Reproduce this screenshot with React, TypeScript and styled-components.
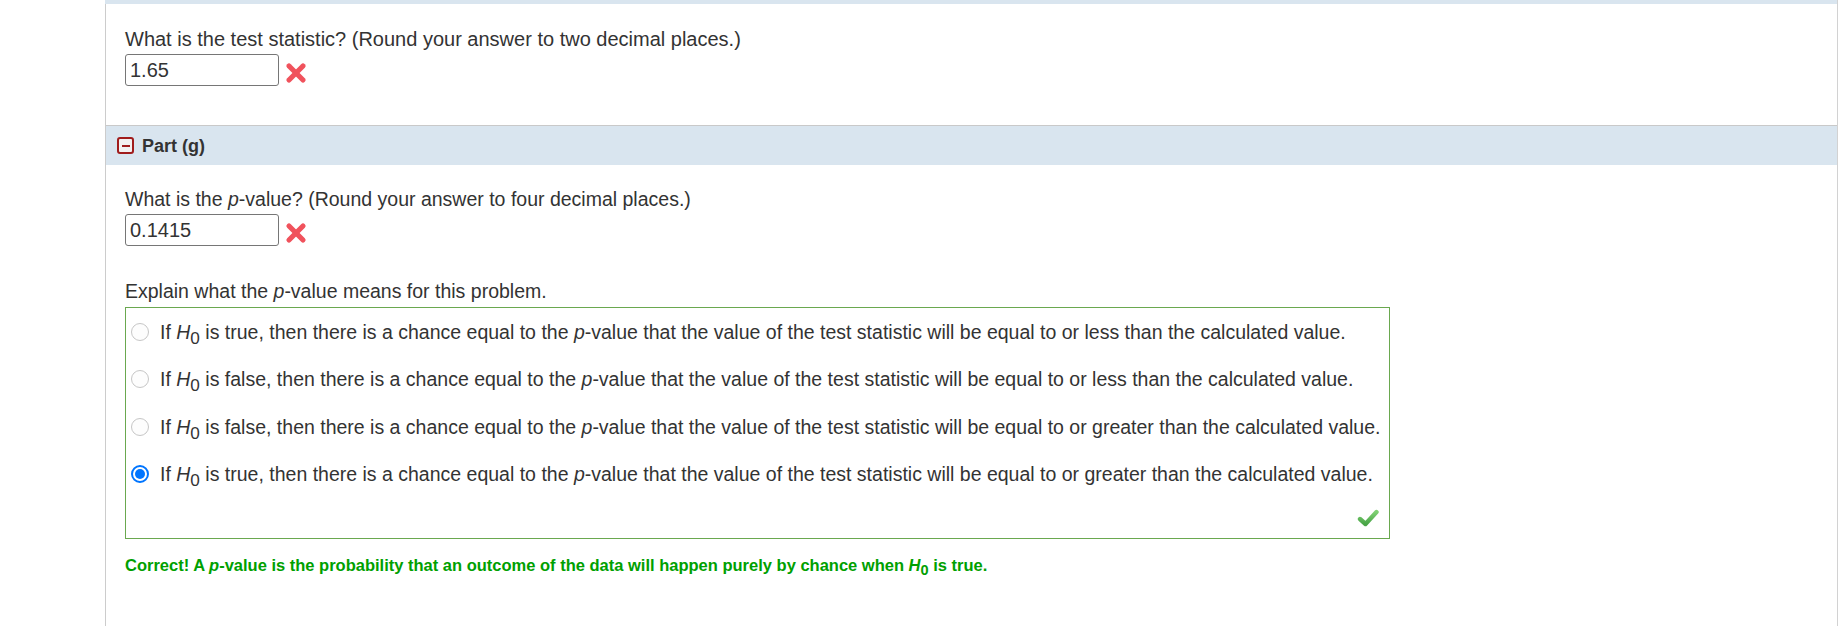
import React from "react";
import styled, { createGlobalStyle, css } from "styled-components";

const GlobalStyle = createGlobalStyle`
  html, body { margin: 0; padding: 0; background: #ffffff; }
  body {
    font-family: "Liberation Sans", Arial, Helvetica, sans-serif;
    color: #333333;
  }
  * { box-sizing: border-box; }
`;

const Page = styled.div`
  display: flex;
  width: 1840px;
  height: 626px;
  overflow: hidden;
`;

const Gutter = styled.div`
  flex: none;
  width: 105px;
`;

const Panel = styled.main`
  flex: 1;
  display: flex;
  flex-direction: column;
  border-left: 1px solid #cccccc;
  border-right: 1px solid #d2d2d2;
  margin-right: 2px;
`;

const TopBar = styled.div`
  height: 4px;
  margin-left: -1px;
  background: #d9e5ef;
`;

const Section = styled.section<{ $top: number; $bottom: number }>`
  display: flex;
  flex-direction: column;
  align-items: flex-start;
  padding: ${(p) => p.$top}px 20px ${(p) => p.$bottom}px 19px;
`;

const QuestionText = styled.p<{ $gap?: number; $size?: number }>`
  margin: ${(p) => p.$gap ?? 0}px 0 0 0;
  font-size: ${(p) => p.$size ?? 20}px;
  line-height: 24px;
  color: #333333;
`;

const Var = styled.i`
  font-style: italic;
`;

const Sub = styled.sub`
  font-size: 0.88em;
  line-height: 0;
  vertical-align: -0.27em;
  font-style: normal;
`;

const AnswerRow = styled.div`
  display: flex;
  align-items: flex-end;
  gap: 5px;
  margin-top: 3px;
`;

const AnswerInput = styled.input`
  width: 154px;
  height: 32px;
  padding: 0 4px;
  border: 1px solid #767676;
  border-radius: 3px;
  font-family: "Liberation Sans", Arial, sans-serif;
  font-size: 20px;
  color: #333333;
  background: #ffffff;
  outline: none;
`;

const WrongMark = styled.svg`
  flex: none;
  margin-bottom: 2px;
`;

const PartHeader = styled.header`
  display: flex;
  align-items: center;
  gap: 8px;
  height: 40px;
  padding-left: 11px;
  border-top: 1px solid #c9c9c9;
  background: #d9e5ef;
`;

const CollapseIcon = styled.span`
  position: relative;
  flex: none;
  width: 17px;
  height: 17px;
  border: 2px solid #a01c1c;
  border-radius: 3px;
  background: #f3f0f0;
  &::after {
    content: "";
    position: absolute;
    left: 2.5px;
    top: 5.5px;
    width: 8px;
    height: 2px;
    background: #a01c1c;
  }
`;

const PartTitle = styled.h3`
  margin: 0;
  font-size: 18px;
  font-weight: bold;
  color: #333333;
  line-height: 22px;
`;

const ChoiceBox = styled.div`
  display: flex;
  flex-direction: column;
  width: fit-content;
  margin-top: 4px;
  border: 1px solid #6aa84f;
  padding: 0 9px 0 5px;
`;

const ChoiceRow = styled.label`
  display: flex;
  align-items: center;
  height: 47.5px;
  font-size: 19.5px;
  line-height: 24px;
  color: #333333;
  white-space: nowrap;
`;

const Radio = styled.span<{ $checked?: boolean }>`
  position: relative;
  flex: none;
  width: 18px;
  height: 18px;
  margin-right: 11px;
  border-radius: 50%;
  ${(p) =>
    p.$checked
      ? css`
          border: 2px solid #0075ff;
          background: #ffffff;
          &::after {
            content: "";
            position: absolute;
            left: 2px;
            top: 2px;
            width: 10px;
            height: 10px;
            border-radius: 50%;
            background: #0075ff;
          }
        `
      : css`
          border: 1px solid #c6c6c6;
          background: #fdfdfd;
        `}
`;

const CheckRow = styled.div`
  display: flex;
  justify-content: flex-end;
  align-items: center;
  height: 40px;
  padding-right: 1px;
`;

const Feedback = styled.p`
  margin: 16px 0 0 0;
  font-size: 16.5px;
  line-height: 20px;
  font-weight: bold;
  color: #00a000;
`;

const XIcon = () => (
  <WrongMark width="24" height="22" viewBox="0 0 24 22">
    <g stroke="#f0525c" strokeWidth="5.2" strokeLinecap="round">
      <line x1="5" y1="4" x2="19" y2="18" />
      <line x1="19" y1="4" x2="5" y2="18" />
    </g>
  </WrongMark>
);

const CheckIcon = () => (
  <svg width="22" height="18" viewBox="0 0 22 18">
    <defs>
      <linearGradient id="chk" x1="0" y1="0" x2="0" y2="1">
        <stop offset="0" stopColor="#7fd073" />
        <stop offset="1" stopColor="#48a446" />
      </linearGradient>
    </defs>
    <path
      d="M3 10 L8.5 15 L19.5 3"
      fill="none"
      stroke="url(#chk)"
      strokeWidth="4.4"
      strokeLinecap="round"
      strokeLinejoin="round"
    />
  </svg>
);

const H0 = () => (
  <>
    <Var>H</Var>
    <Sub>0</Sub>
  </>
);

const choices: { truth: string; dir: string; checked?: boolean }[] = [
  { truth: "true", dir: "less" },
  { truth: "false", dir: "less" },
  { truth: "false", dir: "greater" },
  { truth: "true", dir: "greater", checked: true },
];

export default function App() {
  return (
    <>
      <GlobalStyle />
      <Page>
        <Gutter />
        <Panel>
          <TopBar />
          <Section $top={23} $bottom={39}>
            <QuestionText>
              What is the test statistic? (Round your answer to two decimal places.)
            </QuestionText>
            <AnswerRow>
              <AnswerInput readOnly defaultValue="1.65" />
              <XIcon />
            </AnswerRow>
          </Section>

          <PartHeader>
            <CollapseIcon />
            <PartTitle>Part (g)</PartTitle>
          </PartHeader>

          <Section $top={22} $bottom={0}>
            <QuestionText $size={19.5}>
              What is the <Var>p</Var>-value? (Round your answer to four decimal places.)
            </QuestionText>
            <AnswerRow>
              <AnswerInput readOnly defaultValue="0.1415" />
              <XIcon />
            </AnswerRow>

            <QuestionText $gap={33} $size={19.5}>
              Explain what the <Var>p</Var>-value means for this problem.
            </QuestionText>
            <ChoiceBox>
              {choices.map((c, i) => (
                <ChoiceRow key={i}>
                  <Radio $checked={c.checked} />
                  <span>
                    If <H0 /> is {c.truth}, then there is a chance equal to the{" "}
                    <Var>p</Var>-value that the value of the test statistic will be equal
                    to or {c.dir} than the calculated value.
                  </span>
                </ChoiceRow>
              ))}
              <CheckRow>
                <CheckIcon />
              </CheckRow>
            </ChoiceBox>

            <Feedback>
              Correct! A <Var>p</Var>-value is the probability that an outcome of the data
              will happen purely by chance when <H0 /> is true.
            </Feedback>
          </Section>
        </Panel>
      </Page>
    </>
  );
}
